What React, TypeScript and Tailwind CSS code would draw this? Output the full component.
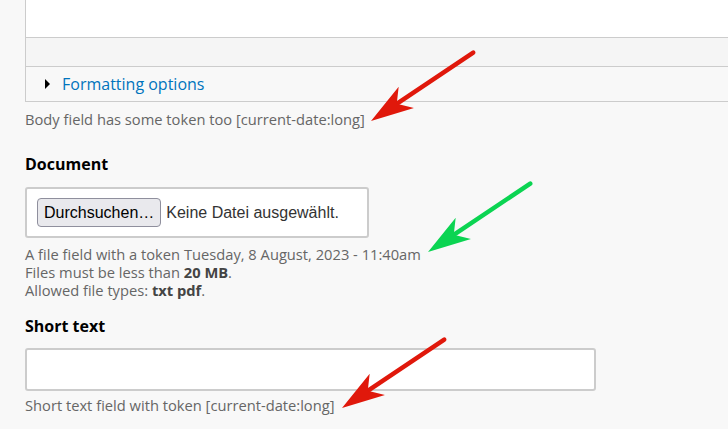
import React from 'react'

const arrows = [
  { x: 371, y: 121, color: '#e0180b' },
  { x: 428, y: 252, color: '#0bd452' },
  { x: 342, y: 408, color: '#e0180b' },
]

function Arrows() {
  return (
    <svg className="absolute inset-0 pointer-events-none" width={728} height={429}>
      {arrows.map((a, i) => (
        <g key={i} transform={`translate(${a.x} ${a.y}) rotate(-33.8)`}>
          <line x1={30} y1={0} x2={123} y2={0} stroke={a.color} strokeWidth={4.5} strokeLinecap="round" />
          <polygon points="0,0 42,-13 31,0 43,13" fill={a.color} />
        </g>
      ))}
    </svg>
  )
}

export default function App() {
  return (
    <div className="relative h-[429px] w-[728px] overflow-hidden bg-[#f8f8f8] pl-[25px] font-['Open_Sans',sans-serif] text-[#222]">
      {/* body field editor, cropped at top */}
      <div className="border-l border-b border-[#cccccc] -mr-2 border-r">
        <div className="h-[38px] bg-white border-b border-[#cccccc]" />
        <div className="h-[29px] bg-[#f5f5f5] border-b border-[#cccccc]" />
        <div className="h-[34px] flex items-center pl-[19px] gap-[12px]">
          <span className="w-0 h-0 border-y-[5px] border-y-transparent border-l-[5px] border-l-black" />
          <span className="text-[16px] text-[#0074bd]">Formatting options</span>
        </div>
      </div>
      <p className="mt-[8px] text-[14.7px] leading-[18px] text-[#666]">Body field has some token too [current-date:long]</p>

      <div className="mt-[26px] text-[16px] font-bold leading-[20px] text-black">Document</div>
      <div className="mt-[13px] w-[344px] h-[51px] bg-white border-2 border-[#cccccc] rounded-[3px] flex items-center pl-[10px] font-['Liberation_Sans',sans-serif] text-[16px]">
        <button className="h-[29px] px-[6px] bg-[#e9e9ed] border border-[#8f8f9d] rounded-[4px] text-black">Durchsuchen…</button>
        <span className="ml-[5px] text-[#333]">Keine Datei ausgewählt.</span>
      </div>
      <div className="mt-[7px] text-[14.7px] leading-[18px] text-[#666]">
        <p>A file field with a token Tuesday, 8 August, 2023 - 11:40am</p>
        <p>Files must be less than <strong className="text-[#444]">20 MB</strong>.</p>
        <p>Allowed file types: <strong className="text-[#444]">txt pdf</strong>.</p>
      </div>

      <div className="mt-[17px] text-[16px] font-bold leading-[20px] text-black">Short text</div>
      <div className="mt-[12px] w-[571px] h-[43px] bg-white border-2 border-[#cccccc] rounded-[3px]" />
      <p className="mt-[5px] text-[14.7px] leading-[18px] text-[#666]">Short text field with token [current-date:long]</p>

      <Arrows />
    </div>
  )
}
